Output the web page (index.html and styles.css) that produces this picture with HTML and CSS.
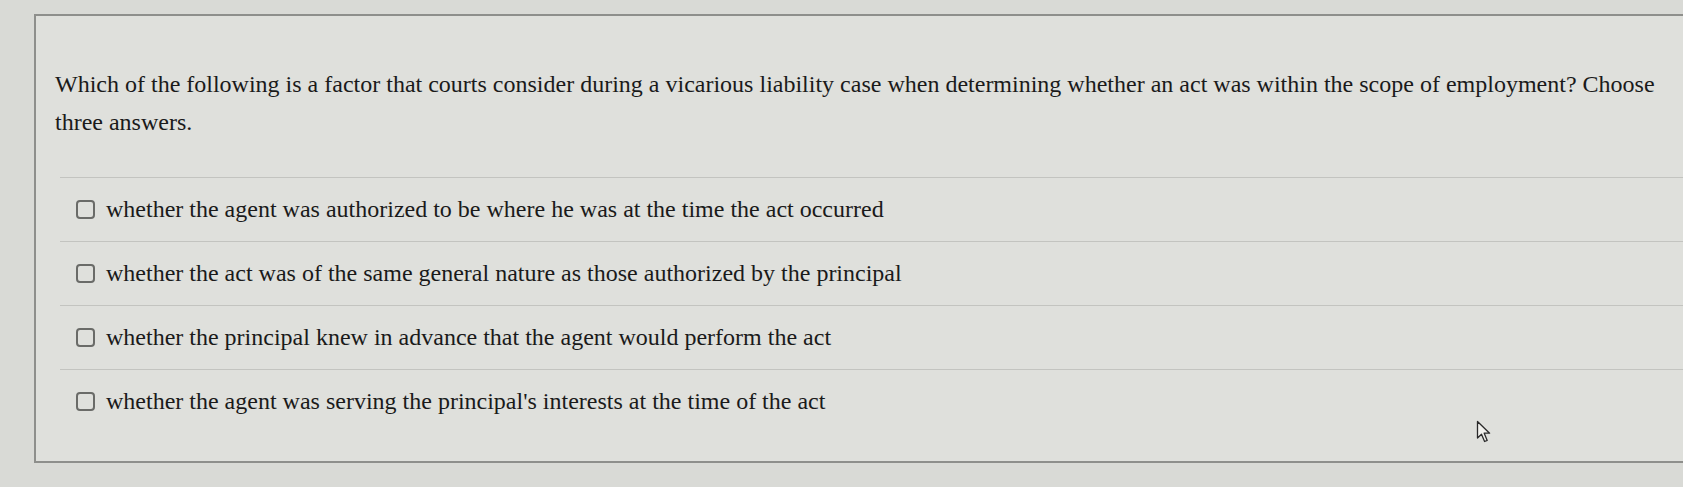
FILE: index.html
```html
<!DOCTYPE html>
<html lang="en">
<head>
<meta charset="utf-8">
<title>Question</title>
<link rel="stylesheet" href="styles.css">
</head>
<body>
<div class="page">
  <div class="panel">
    <p class="question">Which of the following is a factor that courts consider during a vicarious liability case when determining whether an act was within the scope of employment? Choose three answers.</p>
    <ul class="options">
      <li class="option"><span class="box"></span><span class="label">whether the agent was authorized to be where he was at the time the act occurred</span></li>
      <li class="option"><span class="box"></span><span class="label">whether the act was of the same general nature as those authorized by the principal</span></li>
      <li class="option"><span class="box"></span><span class="label">whether the principal knew in advance that the agent would perform the act</span></li>
      <li class="option"><span class="box"></span><span class="label">whether the agent was serving the principal's interests at the time of the act</span></li>
    </ul>
  </div>
  <svg class="cursor" width="16" height="24" viewBox="0 0 16 24"><path d="M1.5 1.5 L1.5 18 L5.5 14.2 L8.6 21.5 L11.2 20.4 L8.2 13.2 L13.6 13.2 Z" fill="#f2f2ee" stroke="#2a2a2a" stroke-width="1.3" stroke-linejoin="round"/></svg>
</div>
</body>
</html>
```
FILE: styles.css
```css
html, body {
  margin: 0;
  padding: 0;
}
body {
  background: #d9dad6;
  font-family: "Liberation Serif", "Times New Roman", serif;
  color: #1a1a1a;
}
.page {
  position: relative;
  width: 1683px;
  height: 487px;
  overflow: hidden;
  padding-top: 14px;
  box-sizing: border-box;
}
.panel {
  margin-left: 34px;
  border-top: 2px solid #8e8f8c;
  border-left: 2px solid #8e8f8c;
  border-bottom: 2px solid #8e8f8c;
  background: #dfe0dc;
  height: 449px;
  box-sizing: border-box;
  padding: 49px 0 0 19px;
}
.question {
  margin: 0;
  font-size: 24px;
  line-height: 38px;
  width: 1626px;
}
.options {
  list-style: none;
  margin: 36px 0 0 5px;
  padding: 0;
}
.option {
  display: flex;
  align-items: center;
  border-top: 1.5px solid #c3c4c0;
  padding: 16px 0 16px 16px;
  font-size: 24px;
  line-height: 31px;
}
.box {
  width: 15px;
  height: 15px;
  border: 2px solid #6a6b68;
  border-radius: 4px;
  margin-right: 11px;
  flex: none;
}
.cursor {
  position: absolute;
  left: 1476px;
  top: 420px;
}
```
